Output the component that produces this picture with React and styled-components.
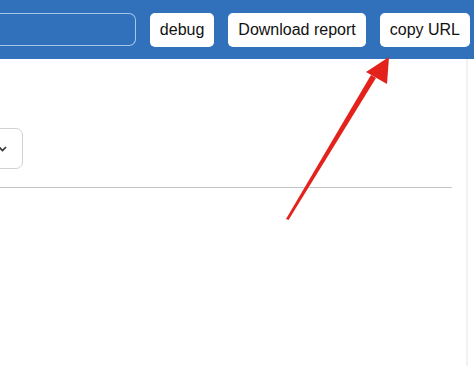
import React from "react";
import styled, { createGlobalStyle } from "styled-components";

const GlobalStyle = createGlobalStyle`
  html, body {
    margin: 0;
    padding: 0;
    background: #ffffff;
    font-family: "Liberation Sans", Arial, sans-serif;
    overflow: hidden;
  }
`;

const Page = styled.div`
  position: relative;
  width: 474px;
  height: 366px;
  overflow: hidden;
  display: flex;
  flex-direction: column;
`;

const Toolbar = styled.header`
  display: flex;
  align-items: center;
  gap: 14px;
  height: 59px;
  padding: 0 4px 0 0;
  background: #3170ba;
  flex-shrink: 0;
`;

const SearchField = styled.input`
  flex: 1;
  min-width: 0;
  width: 0;
  height: 33px;
  box-sizing: border-box;
  border: 1.5px solid #a8c5ea;
  border-left: none;
  border-radius: 0 7px 7px 0;
  background: transparent;
  outline: none;
`;

const ToolButton = styled.button`
  height: 34px;
  padding: 0 10px;
  border: none;
  border-radius: 5px;
  background: #ffffff;
  color: #111;
  font-family: "Liberation Sans", Arial, sans-serif;
  font-size: 16px;
  white-space: nowrap;
  flex-shrink: 0;
`;

const Body = styled.main`
  flex: 1;
  display: flex;
`;

const Content = styled.section`
  width: 466px;
  padding-top: 69px;
  display: flex;
  flex-direction: column;
`;

const SelectBox = styled.div`
  width: 40px;
  height: 41px;
  margin-left: -17px;
  box-sizing: border-box;
  border: 1px solid #d2d2d2;
  border-radius: 7px;
  display: flex;
  align-items: center;
  justify-content: flex-end;
  padding-right: 15px;
  color: #333;
`;

const Rule = styled.hr`
  width: 452px;
  margin: 18px 0 0 0;
  border: none;
  border-top: 1px solid #c4c4c4;
`;

const Gutter = styled.div`
  width: 2px;
  background: #f2f2f2;
`;

const Annotation = styled.svg`
  position: absolute;
  left: 0;
  top: 0;
  pointer-events: none;
`;

export default function App() {
  return (
    <>
      <GlobalStyle />
      <Page>
        <Toolbar>
          <SearchField />
          <ToolButton>debug</ToolButton>
          <ToolButton>Download report</ToolButton>
          <ToolButton>copy URL</ToolButton>
        </Toolbar>
        <Body>
          <Content>
            <SelectBox>
              <svg width="9" height="6" viewBox="0 0 9 6">
                <path d="M1 1 L4.5 4.5 L8 1" fill="none" stroke="#333" strokeWidth="1.6" />
              </svg>
            </SelectBox>
            <Rule />
          </Content>
          <Gutter />
        </Body>
        <Annotation width="474" height="366" viewBox="0 0 474 366">
          <polygon points="286,219 288.5,220 376,78 371,75" fill="#e3231b" />
          <polygon points="389,57 366,72 387,84" fill="#e3231b" />
        </Annotation>
      </Page>
    </>
  );
}
